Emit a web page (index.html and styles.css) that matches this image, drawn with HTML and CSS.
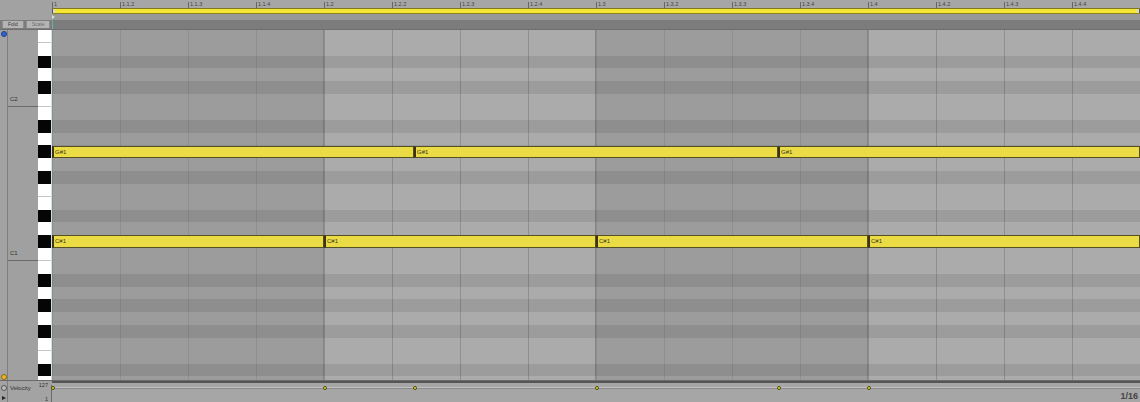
FILE: index.html
```html
<!DOCTYPE html>
<html>
<head>
<meta charset="utf-8">
<link rel="stylesheet" href="styles.css">
</head>
<body>
<div class="app">
  <div class="header">
    <div class="header-left">
      <div class="hl-top"></div>
      <div class="hl-bottom"><span class="btn">Fold</span><span class="btn">Scale</span></div>
    </div>
    <div class="header-right">
      <div class="ruler">
        <span class="tick">1</span><span class="tick">1.1.2</span><span class="tick">1.1.3</span><span class="tick">1.1.4</span>
        <span class="tick">1.2</span><span class="tick">1.2.2</span><span class="tick">1.2.3</span><span class="tick">1.2.4</span>
        <span class="tick">1.3</span><span class="tick">1.3.2</span><span class="tick">1.3.3</span><span class="tick">1.3.4</span>
        <span class="tick">1.4</span><span class="tick">1.4.2</span><span class="tick">1.4.3</span><span class="tick">1.4.4</span>
      </div>
      <div class="loop"><span class="loop-start"></span><span class="loop-end"></span></div>
      <div class="strip1"><span class="marker"></span></div>
      <div class="strip2"><span class="cursor"></span></div>
    </div>
  </div>

  <div class="main">
    <div class="side-icons">
      <span class="dot blue"></span>
      <span class="dot orange"></span>
    </div>
    <div class="side-labels" id="labels"></div>
    <div class="keys" id="keys"></div>
    <div class="grid" id="grid">
      <div class="note" style="top:115.5px;left:0;width:362px">G#1</div>
      <div class="note" style="top:115.5px;left:362px;width:364px">G#1</div>
      <div class="note" style="top:115.5px;left:726px;width:362px">G#1</div>
      <div class="note" style="top:205.3px;left:0;width:272px">C#1</div>
      <div class="note" style="top:205.3px;left:272px;width:272px">C#1</div>
      <div class="note" style="top:205.3px;left:544px;width:272px">C#1</div>
      <div class="note" style="top:205.3px;left:816px;width:272px">C#1</div>
    </div>
  </div>

  <div class="vel">
    <div class="vel-icons">
      <span class="vi-circle"></span>
      <span class="vi-tri"></span>
    </div>
    <div class="vel-label">Velocity</div>
    <div class="vel-scale"><span>127</span><span>1</span></div>
    <div class="vel-lane">
      <div class="vel-topline"></div>
      <div class="vel-maxline"></div>
      <span class="vdot" style="left:0"></span>
      <span class="vdot" style="left:272px"></span>
      <span class="vdot" style="left:362px"></span>
      <span class="vdot" style="left:544px"></span>
      <span class="vdot" style="left:726px"></span>
      <span class="vdot" style="left:816px"></span>
      <span class="grid-size">1/16</span>
    </div>
  </div>
</div>
<script>
  // rows from F2 (top) downward, 28 semitones
  var names = ['F','E','D#','D','C#','C','B','A#','A','G#','G','F#'];
  var rows = [];
  for (var i = 0; i < 28; i++) {
    var n = names[i % 12];
    var o = 2 - Math.floor((i + 6) / 12);
    rows.push({n: n, o: o, black: n.indexOf('#') >= 0});
  }
  var keys = document.getElementById('keys');
  var grid = document.getElementById('grid');
  var labels = document.getElementById('labels');
  var firstNote = grid.firstChild;
  rows.forEach(function (r) {
    var k = document.createElement('div');
    k.className = 'key ' + (r.black ? 'k-black' : 'k-white') + ((r.n === 'C' || r.n === 'F') ? ' k-sep' : '');
    keys.appendChild(k);
    var g = document.createElement('div');
    g.className = 'row ' + (r.black ? 'r-black' : 'r-white');
    grid.insertBefore(g, firstNote);
    var l = document.createElement('div');
    l.className = 'lab' + (r.n === 'C' ? ' lab-c' : '');
    if (r.n === 'C') l.textContent = 'C' + r.o;
    labels.appendChild(l);
  });
</script>
</body>
</html>
```

FILE: styles.css
```css
* { box-sizing: border-box; }
html, body { margin: 0; padding: 0; }
body {
  width: 1140px;
  height: 402px;
  overflow: hidden;
  background: #a3a3a3;
  font-family: "Liberation Sans", Arial, sans-serif;
  color: #2a2a2a;
}
.app { display: flex; flex-direction: column; width: 1140px; height: 402px; }

/* header */
.header { display: flex; height: 30px; flex: none; }
.header-left { width: 52px; display: flex; flex-direction: column; flex: none; }
.hl-top { height: 20px; background: #a2a2a2; }
.hl-bottom {
  height: 10px; background: #7c7c7c; display: flex; gap: 2px; padding: 1px 0 2px 2px;
  border-bottom: 1px solid #6e6e6e;
}
.btn {
  height: 7px; background: #b4b4b4; color: #3a3a3a; font-size: 5px; line-height: 7px;
  padding: 0 4px; border: 1px solid #8c8c8c; border-top: 0; border-bottom: 0;
}
.btn:first-child { width: 22px; padding-left: 5px; }
.btn:last-child { width: 24px; padding-left: 5px; color: #6a6a6a; }
.header-right { flex: 1; display: flex; flex-direction: column; }
.ruler { height: 8px; background: #a6a6a6; display: flex; }
.tick {
  width: 68px; flex: none; font-size: 5.5px; color: #444;
  border-left: 1px solid #666; padding-left: 1px; height: 6px; margin-top: 2px; line-height: 5px;
}
.loop {
  height: 6px; background: #f4e632; border-top: 1px solid #7e7820; border-bottom: 1px solid #8a8422;
  display: flex; justify-content: space-between;
}
.loop-start { width: 3px; border-left: 1px solid #555; background: #d8d8d8; }
.loop-end { width: 3px; background: #d8d8d8; border-right: 1px solid #555; }
.strip1 { height: 6px; background: #979797; }
.marker {
  display: block; width: 0; height: 0; margin-top: 1px;
  border-top: 2px solid transparent; border-bottom: 2px solid transparent; border-left: 3px solid #dcdcdc;
}
.strip2 { height: 10px; background: #7c7c7c; border-bottom: 1px solid #6e6e6e; }
.cursor { display: block; width: 1px; height: 9px; background: #5fb4b0; }

/* main */
.main { display: flex; height: 350px; flex: none; overflow: hidden; }
.side-icons {
  width: 8px; flex: none; background: #a2a2a2; border-right: 1px solid #7e7e7e;
  display: flex; flex-direction: column; justify-content: space-between; align-items: center;
  padding: 1px 0 0 0;
}
.dot { width: 6px; height: 6px; border-radius: 50%; display: block; }
.dot.blue { background: #2f62d4; border: 1px solid #1e3f8a; }
.dot.orange { background: #f0b323; border: 1px solid #8a6a14; margin-bottom: 0; }
.side-labels { width: 30px; flex: none; background: #a0a0a0; display: flex; flex-direction: column; }
.lab { height: 12.833px; flex: none; font-size: 6px; line-height: 12px; padding-left: 2px; color: #333; }
.lab-c { border-bottom: 1px solid #6a6a6a; line-height: 10px; }
.keys { width: 14px; flex: none; display: flex; flex-direction: column; border-right: 1px solid #cfe2e2; background: #fff; }
.key { height: 12.833px; flex: none; }
.k-white { background: #ffffff; }
.k-black { background: #050505; }
.k-sep { border-bottom: 1px solid #c4c4c4; }

.grid {
  position: relative; flex: 1; display: flex; flex-direction: column; overflow: hidden;
  background-color: #9e9e9e;
  background-image:
    linear-gradient(90deg, transparent 0 271px, #848484 271px 272px, transparent 272px 543px, #848484 543px 544px, transparent 544px 815px, #848484 815px 816px, transparent 816px),
    repeating-linear-gradient(90deg, #8f8f8f 0 1px, transparent 1px 68px),
    linear-gradient(90deg, #9c9c9c 0 272px, #ababab 272px 544px, #9c9c9c 544px 816px, #ababab 816px);
}
.row { height: 12.833px; flex: none; }
.r-black { background: rgba(0, 0, 0, 0.085); }
.r-white { background: rgba(0, 0, 0, 0); }

.note {
  position: absolute; height: 12.833px; background: #ebdc45;
  border: 1px solid #555022; border-left: 2px solid #3a3518;
  font-size: 6px; line-height: 10px; padding-left: 1px; color: #3a3520;
}

/* velocity */
.vel { display: flex; height: 22px; flex: none; border-top: 1px solid #6a6a6a; }
.vel-icons {
  width: 8px; flex: none; background: #a2a2a2; border-right: 1px solid #7e7e7e;
  display: flex; flex-direction: column; align-items: center; justify-content: space-around; padding-top: 1px;
}
.vi-circle { width: 6px; height: 6px; border-radius: 50%; border: 1px solid #555; background: #bdbdbd; display: block; }
.vi-tri { width: 0; height: 0; border-top: 2.5px solid transparent; border-bottom: 2.5px solid transparent; border-left: 4px solid #222; display: block; }
.vel-label { width: 28px; flex: none; font-size: 6px; padding: 4px 0 0 2px; color: #333; }
.vel-scale {
  width: 16px; flex: none; display: flex; flex-direction: column; justify-content: space-between; align-items: flex-end;
  font-size: 5.5px; color: #333; padding: 1px 3px 0 0; border-right: 1px solid #6a6a6a; margin-top: 4px;
}
.vel-scale span { line-height: 6px; }
.vel-scale span:first-child { margin-top: -4px; }
.vel-lane { position: relative; flex: 1; background: #a6a6a6; display: flex; flex-direction: column; }
.vel-topline { height: 2px; background: #555; }
.vel-maxline { height: 2px; margin-top: 4px; background: #8a8a8a; border-top: 1px solid #c0c0c0; }
.vdot {
  position: absolute; top: 5px; width: 4px; height: 4px; border-radius: 50%;
  background: #e2e23a; border: 1px solid #4a4a10; margin-left: -1px;
}
.grid-size {
  position: absolute; right: 2px; bottom: 1px; font-size: 9px; color: #444; font-weight: bold; line-height: 9px;
}
```
